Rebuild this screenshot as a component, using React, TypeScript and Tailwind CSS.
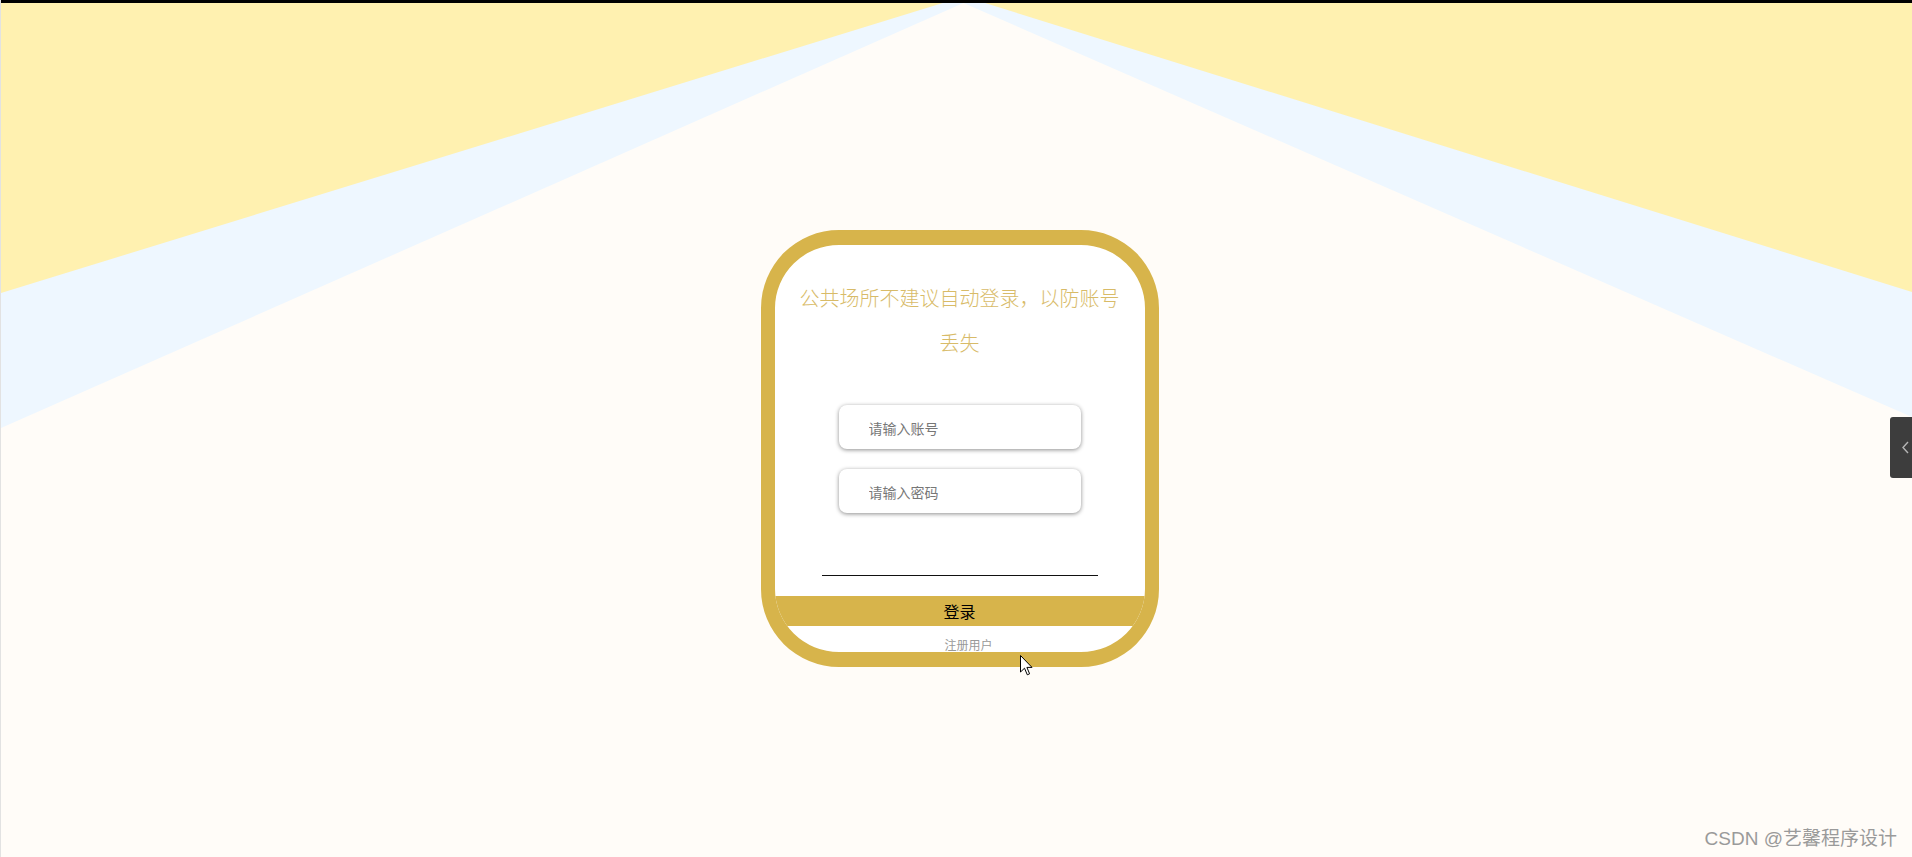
import React from 'react';

const Backdrop: React.FC = () => (
  <svg
    className="absolute inset-0 w-full h-full"
    viewBox="0 0 1912 857"
    preserveAspectRatio="none"
  >
    <rect x="0" y="0" width="1912" height="857" fill="#fffcf8" />
    <polygon points="0,0 1912,0 1912,417 963,3 0,428" fill="#eef7ff" />
    <polygon points="0,0 952,0 0,293" fill="#fff1b0" />
    <polygon points="975,0 1912,0 1912,292" fill="#fff1b0" />
  </svg>
);

const Cursor: React.FC = () => (
  <svg className="absolute left-[1019px] top-[655px] w-[13px] h-[21px]" viewBox="0 0 13 21">
    <path
      d="M0.5 0.5 L0.5 17 L4.5 13.2 L7.3 19.8 L9.6 18.8 L6.9 12.4 L12 12.4 Z"
      fill="#fff"
      stroke="#000"
      strokeWidth="1"
      strokeLinejoin="round"
    />
  </svg>
);

const LoginCard: React.FC = () => {
  return (
    <div className="w-[398px] rounded-[78px] border-x-[14px] border-y-[15px] border-[#d7b44b] bg-white overflow-hidden flex flex-col items-center">
      <p className="mt-[30px] w-[330px] text-center text-[20px] leading-[45px] font-light text-[#d8bb68]">
        公共场所不建议自动登录，以防账号丢失
      </p>

      <input
        type="text"
        placeholder="请输入账号"
        className="mt-[40px] w-[242px] h-[44px] pl-[30px] pt-[2px] rounded-[8px] bg-white text-[14px] outline-none shadow-[0_1px_4px_rgba(0,0,0,0.45)] placeholder:text-[#777]"
      />
      <input
        type="password"
        placeholder="请输入密码"
        className="mt-[20px] w-[242px] h-[44px] pl-[30px] pt-[2px] rounded-[8px] bg-white text-[14px] outline-none shadow-[0_1px_4px_rgba(0,0,0,0.45)] placeholder:text-[#777]"
      />

      <div className="mt-[62px] w-[276px] h-px bg-[#111]" />

      <button className="mt-[20px] w-full h-[30px] bg-[#d7b44b] text-[16px] leading-[30px] font-normal text-black">
        登录
      </button>

      <a className="pt-[12px] pl-[18px] text-[12px] leading-[14px] text-[#999] cursor-pointer">
        注册用户
      </a>
    </div>
  );
};

export default function App() {
  return (
    <div
      className="relative w-full h-[857px] overflow-hidden bg-[#fffcf8] border-l border-[#e2e2e2]"
      style={{ fontFamily: '"Noto Sans CJK SC", "Liberation Sans", sans-serif' }}
    >
      <Backdrop />
      <div className="relative h-[3px] bg-black" />

      <div className="relative flex justify-center pl-[6px] pt-[227px]">
        <LoginCard />
      </div>

      {/* side drawer tab */}
      <div className="absolute right-0 top-[417px] w-[22px] h-[61px] rounded-l-[3px] bg-[#3d3d3d] flex items-center justify-end pr-[3px]">
        <svg className="w-[7px] h-[13px]" viewBox="0 0 7 13">
          <polyline points="6,1 1,6.5 6,12" fill="none" stroke="#b5b5b5" strokeWidth="1.4" />
        </svg>
      </div>

      <div
        className="absolute right-[15px] bottom-[6px] text-[19px] leading-[24px] text-[#9a9a9a]"
        style={{ fontFamily: '"Liberation Sans", "Noto Sans CJK SC", sans-serif' }}
      >
        CSDN @艺馨程序设计
      </div>

      <Cursor />
    </div>
  );
}
